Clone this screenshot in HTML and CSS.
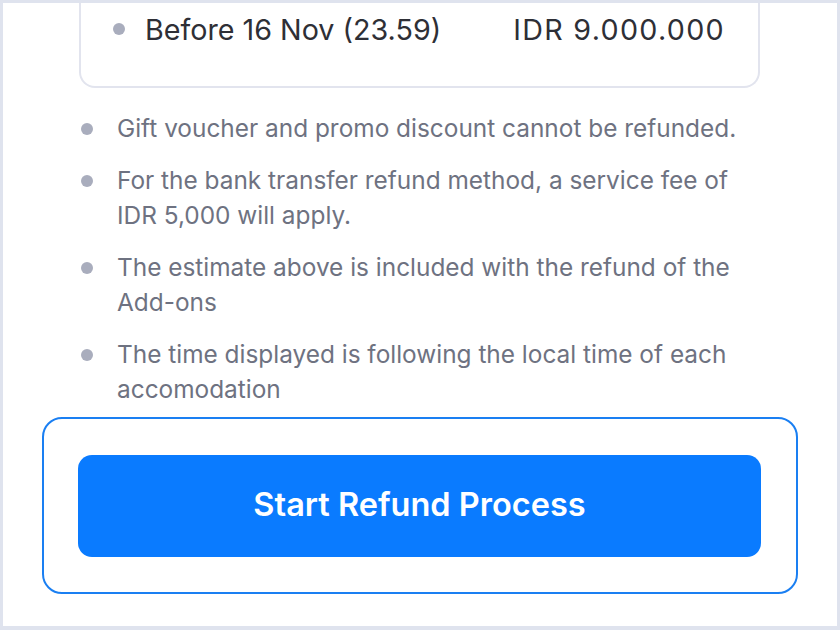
FILE: index.html
```html
<!DOCTYPE html>
<html>
<head>
<meta charset="utf-8">
<link rel="stylesheet" href="styles.css">
</head>
<body>
<div class="frame">
  <div class="card">
    <div class="policy-row">
      <span class="dot dot-dark"></span>
      <span class="policy-date">Before 16 Nov (23.59)</span>
      <span class="policy-amount">IDR 9.000.000</span>
    </div>
  </div>
  <ul class="notes">
    <li class="note"><span class="dot"></span><span class="note-text">Gift voucher and promo discount cannot be refunded.</span></li>
    <li class="note"><span class="dot"></span><span class="note-text">For the bank transfer refund method, a service fee of IDR 5,000 will apply.</span></li>
    <li class="note"><span class="dot"></span><span class="note-text">The estimate above is included with the refund of the Add-ons</span></li>
    <li class="note"><span class="dot"></span><span class="note-text">The time displayed is following the local time of each accomodation</span></li>
  </ul>
  <div class="action-box">
    <button class="primary-btn">Start Refund Process</button>
  </div>
</div>
</body>
</html>
```

FILE: styles.css
```css
* { box-sizing: border-box; }
html, body { margin: 0; padding: 0; }
body {
  background: #dfe3ee;
  width: 840px;
  height: 630px;
  padding: 3px 3px 4px 3px;
  font-family: Inter, "Noto Sans", sans-serif;
}
.frame {
  background: #ffffff;
  height: 623px;
  overflow: hidden;
}
.card {
  margin: -30px 77px 0 76px;
  border: 2px solid #e2e4ee;
  border-top: none;
  border-radius: 0 0 16px 16px;
  padding: 36px 0 37px 32px;
}
.policy-row {
  display: flex;
  align-items: center;
  height: 40px;
  color: #2e2f36;
  font-size: 28.7px;
}
.dot {
  width: 12px;
  height: 12px;
  border-radius: 50%;
  background: #a9adbd;
  flex: none;
}
.policy-date { margin-left: 20px; }
.policy-amount { margin-left: auto; margin-right: 33px; letter-spacing: 1.3px; }
.notes {
  list-style: none;
  margin: 23px 0 0 0;
  padding: 0 40px 0 78px;
  display: flex;
  flex-direction: column;
  gap: 17px;
}
.note {
  display: flex;
  align-items: flex-start;
  font-size: 24.4px;
  line-height: 35px;
  color: #6e7281;
}
.note .dot { margin-top: 12px; }
.note-text { margin-left: 24px; max-width: 630px; }
.action-box {
  margin: 10px 39px 0 39px;
  border: 2px solid #1a7ff2;
  border-radius: 20px;
  padding: 36px 35px 35px 34px;
}
.primary-btn {
  display: block;
  width: 100%;
  height: 102px;
  border: none;
  border-radius: 14px;
  background: #0a7bff;
  color: #ffffff;
  font-family: Inter, "Noto Sans", sans-serif;
  font-size: 32.5px;
  font-weight: 600;
  padding: 0 0 4px 0;
}
```
